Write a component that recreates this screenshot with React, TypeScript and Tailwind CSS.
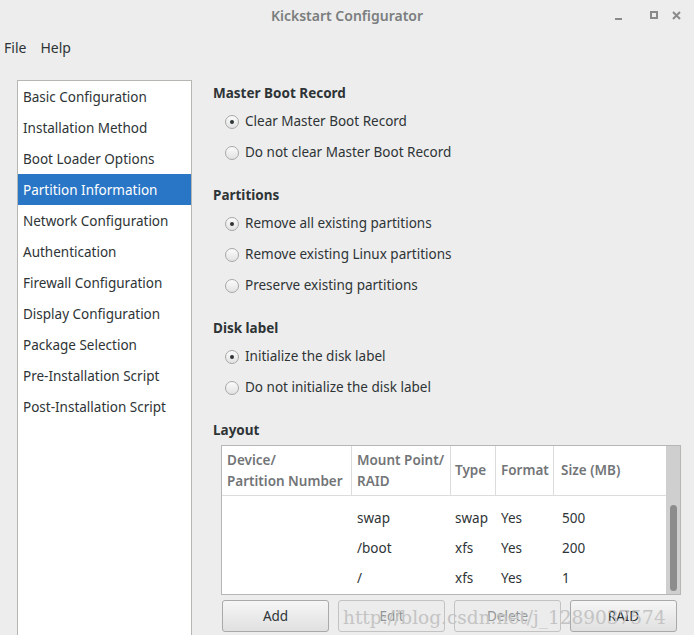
const sideItems = [
  "Basic Configuration",
  "Installation Method",
  "Boot Loader Options",
  "Partition Information",
  "Network Configuration",
  "Authentication",
  "Firewall Configuration",
  "Display Configuration",
  "Package Selection",
  "Pre-Installation Script",
  "Post-Installation Script",
];

const rows = [
  { mount: "swap", type: "swap", format: "Yes", size: "500" },
  { mount: "/boot", type: "xfs", format: "Yes", size: "200" },
  { mount: "/", type: "xfs", format: "Yes", size: "1" },
];

function Radio({ label, checked }: { label: string; checked?: boolean }) {
  return (
    <div className="h-[31px] flex items-center pl-[12px] gap-[6px]">
      <span className="w-[14px] h-[14px] rounded-full border border-[#a8a8a8] bg-gradient-to-b from-[#fbfbfb] to-[#e2e2e2] flex items-center justify-center">
        {checked && <span className="w-[4px] h-[4px] rounded-full bg-[#2e3436]" />}
      </span>
      <span>{label}</span>
    </div>
  );
}

function Heading({ children, first }: { children: string; first?: boolean }) {
  return (
    <div className={`h-[25px] flex items-center font-bold ${first ? "" : "mt-[15px]"}`}>
      {children}
    </div>
  );
}

function Button({ label, disabled }: { label: string; disabled?: boolean }) {
  return (
    <button
      className={`w-[107px] h-[32px] rounded-[3px] border flex items-center justify-center ${
        disabled
          ? "border-[#c3c3c3] bg-[#ececec] text-[#929595]"
          : "border-[#a9a9a9] bg-gradient-to-b from-[#f6f6f6] to-[#e0e0e0] text-[#2e3436]"
      }`}
    >
      {label}
    </button>
  );
}

export default function App() {
  return (
    <div
      className="relative w-[694px] h-[635px] bg-[#ededed] text-[#2e3436] text-[13.5px] overflow-hidden"
      style={{ fontFamily: '"Noto Sans", "DejaVu Sans", sans-serif' }}
    >
      {/* title bar */}
      <div className="h-[30px] relative flex items-center justify-center">
        <span className="text-[#7b7e7e] font-semibold text-[14px]">Kickstart Configurator</span>
        <div className="absolute right-0 top-0 h-[30px] flex items-center">
          <span className="w-[36px] flex justify-center">
            <span className="w-[7px] h-[2px] bg-[#8a8a8a] mt-[8px]" />
          </span>
          <span className="w-[36px] flex justify-center">
            <span className="w-[8px] h-[8px] border-2 border-[#8a8a8a]" />
          </span>
          <span className="w-[22px] flex justify-start">
            <svg width="9" height="9" viewBox="0 0 9 9">
              <path d="M1 1 L8 8 M8 1 L1 8" stroke="#8a8a8a" strokeWidth="2" />
            </svg>
          </span>
        </div>
      </div>

      {/* menu */}
      <div className="h-[34px] flex items-center gap-[14px] pl-[4px] text-[14px]">
        <span>File</span>
        <span>Help</span>
      </div>

      {/* body */}
      <div className="flex pl-[17px] pt-[16px] gap-[21px]">
        <div className="w-[175px] h-[556px] bg-white border border-[#b6b6b3] flex flex-col">
          {sideItems.map((item) => (
            <div
              key={item}
              className={`h-[31px] flex items-center pl-[5px] pt-[1px] ${
                item === "Partition Information" ? "bg-[#2a76c6] text-white" : ""
              }`}
            >
              {item}
            </div>
          ))}
        </div>

        <div className="flex-1 flex flex-col pt-[1px]">
          <Heading first>Master Boot Record</Heading>
          <Radio label="Clear Master Boot Record" checked />
          <Radio label="Do not clear Master Boot Record" />
          <Heading>Partitions</Heading>
          <Radio label="Remove all existing partitions" checked />
          <Radio label="Remove existing Linux partitions" />
          <Radio label="Preserve existing partitions" />
          <Heading>Disk label</Heading>
          <Radio label="Initialize the disk label" checked />
          <Radio label="Do not initialize the disk label" />
          <Heading>Layout</Heading>

          <div className="ml-[8px] mt-[2px] w-[460px] h-[150px] bg-white border border-[#b6b6b3] flex">
            <div className="flex-1 flex flex-col">
              <div className="h-[50px] flex border-b border-[#dcdcdc] text-[#727577] font-semibold leading-[21px]">
                <div className="w-[130px] pl-[5px] flex items-center border-r border-[#dcdcdc]">
                  <span>
                    Device/
                    <br />
                    Partition Number
                  </span>
                </div>
                <div className="w-[99px] pl-[5px] flex items-center border-r border-[#dcdcdc]">
                  <span>
                    Mount Point/
                    <br />
                    RAID
                  </span>
                </div>
                <div className="w-[45px] pl-[4px] flex items-center border-r border-[#dcdcdc]">Type</div>
                <div className="w-[58px] pl-[5px] flex items-center border-r border-[#dcdcdc]">Format</div>
                <div className="flex-1 pl-[7px] flex items-center">Size (MB)</div>
              </div>
              <div className="pt-[7px]">
                {rows.map((r) => (
                  <div key={r.mount} className="h-[30px] flex items-center">
                    <div className="w-[130px]" />
                    <div className="w-[99px] pl-[5px]">{r.mount}</div>
                    <div className="w-[45px] pl-[4px]">{r.type}</div>
                    <div className="w-[58px] pl-[5px]">{r.format}</div>
                    <div className="flex-1 pl-[8px]">{r.size}</div>
                  </div>
                ))}
              </div>
            </div>
            <div className="w-[14px] bg-[#cfcfcf] pt-[59px] pb-[4px] flex justify-center">
              <div className="w-[7px] h-[86px] rounded-full bg-[#8c8c8c]" />
            </div>
          </div>

          <div className="ml-[9px] mt-[5px] flex gap-[9px]">
            <Button label="Add" />
            <Button label="Edit" disabled />
            <Button label="Delete" disabled />
            <Button label="RAID" />
          </div>
        </div>
      </div>

      {/* watermark */}
      <div
        className="absolute left-[343px] top-[604px] text-[18.5px] text-[#c4c4c4] whitespace-nowrap pointer-events-none"
        style={{ fontFamily: '"DejaVu Serif", serif' }}
      >
        http://blog.csdn.net/j_1289037574
      </div>
    </div>
  );
}
